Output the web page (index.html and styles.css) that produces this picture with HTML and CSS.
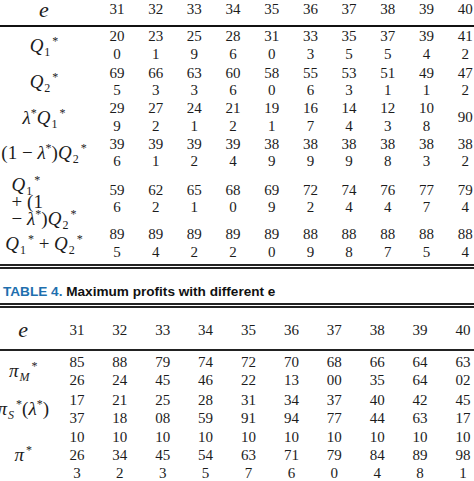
FILE: index.html
```html
<!DOCTYPE html>
<html>
<head>
<meta charset="utf-8">
<link rel="stylesheet" href="styles.css">
</head>
<body>
<div class="page">
  <div class="t1">
    <div class="row head">
      <div class="lab"><i class="ev">e</i></div>
      <div class="c">31</div><div class="c">32</div><div class="c">33</div><div class="c">34</div><div class="c">35</div>
      <div class="c">36</div><div class="c">37</div><div class="c">38</div><div class="c">39</div><div class="c">40</div>
    </div>
    <div class="row r1">
      <div class="lab"><span class="m"><i>Q</i><sub>1</sub><sup>*</sup></span></div>
      <div class="c">20<br>0</div><div class="c">23<br>1</div><div class="c">25<br>9</div><div class="c">28<br>6</div><div class="c">31<br>0</div>
      <div class="c">33<br>3</div><div class="c">35<br>5</div><div class="c">37<br>5</div><div class="c">39<br>4</div><div class="c">41<br>2</div>
    </div>
    <div class="row r2">
      <div class="lab"><span class="m"><i>Q</i><sub>2</sub><sup>*</sup></span></div>
      <div class="c">69<br>5</div><div class="c">66<br>3</div><div class="c">63<br>3</div><div class="c">60<br>6</div><div class="c">58<br>0</div>
      <div class="c">55<br>6</div><div class="c">53<br>3</div><div class="c">51<br>1</div><div class="c">49<br>1</div><div class="c">47<br>2</div>
    </div>
    <div class="row r3">
      <div class="lab"><span class="m"><i>λ</i><sup class="tight">*</sup><i>Q</i><sub>1</sub><sup>*</sup></span></div>
      <div class="c">29<br>9</div><div class="c">27<br>2</div><div class="c">24<br>1</div><div class="c">21<br>2</div><div class="c">19<br>1</div>
      <div class="c">16<br>7</div><div class="c">14<br>4</div><div class="c">12<br>3</div><div class="c">10<br>8</div><div class="c">90</div>
    </div>
    <div class="row r4">
      <div class="lab"><span class="m">(1 − <i>λ</i><sup class="tight">*</sup>)<i>Q</i><sub>2</sub><sup>*</sup></span></div>
      <div class="c">39<br>6</div><div class="c">39<br>1</div><div class="c">39<br>2</div><div class="c">39<br>4</div><div class="c">38<br>9</div>
      <div class="c">38<br>9</div><div class="c">38<br>9</div><div class="c">38<br>8</div><div class="c">38<br>3</div><div class="c">38<br>2</div>
    </div>
    <div class="row r5">
      <div class="lab"><span class="m multi"><span class="ln"><i>Q</i><sub>1</sub><sup>*</sup></span><span class="ln">+ (1</span><span class="ln">− <i>λ</i><sup class="tight">*</sup>)<i>Q</i><sub>2</sub><sup>*</sup></span></span></div>
      <div class="c">59<br>6</div><div class="c">62<br>2</div><div class="c">65<br>1</div><div class="c">68<br>0</div><div class="c">69<br>9</div>
      <div class="c">72<br>2</div><div class="c">74<br>4</div><div class="c">76<br>4</div><div class="c">77<br>7</div><div class="c">79<br>4</div>
    </div>
    <div class="row r6">
      <div class="lab"><span class="m"><i>Q</i><sub>1</sub><sup>*</sup> + <i>Q</i><sub>2</sub><sup>*</sup></span></div>
      <div class="c">89<br>5</div><div class="c">89<br>4</div><div class="c">89<br>2</div><div class="c">89<br>2</div><div class="c">89<br>0</div>
      <div class="c">88<br>9</div><div class="c">88<br>8</div><div class="c">88<br>7</div><div class="c">88<br>5</div><div class="c">88<br>4</div>
    </div>
  </div>

  <div class="caption"><span class="tno">TABLE 4.</span> Maximum profits with different e</div>

  <div class="t2">
    <div class="row head">
      <div class="lab"><i class="ev">e</i></div>
      <div class="c">31</div><div class="c">32</div><div class="c">33</div><div class="c">34</div><div class="c">35</div>
      <div class="c">36</div><div class="c">37</div><div class="c">38</div><div class="c">39</div><div class="c">40</div>
    </div>
    <div class="row r1">
      <div class="lab"><span class="m"><i>π</i><sub><i>M</i></sub><sup>*</sup></span></div>
      <div class="c">85<br>26</div><div class="c">88<br>24</div><div class="c">79<br>45</div><div class="c">74<br>46</div><div class="c">72<br>22</div>
      <div class="c">70<br>13</div><div class="c">68<br>00</div><div class="c">66<br>35</div><div class="c">64<br>64</div><div class="c">63<br>02</div>
    </div>
    <div class="row r2">
      <div class="lab"><span class="m"><i>π</i><sub><i>S</i></sub><sup>*</sup>(<i>λ</i><sup class="tight">*</sup>)</span></div>
      <div class="c">17<br>37</div><div class="c">21<br>18</div><div class="c">25<br>08</div><div class="c">28<br>59</div><div class="c">31<br>91</div>
      <div class="c">34<br>94</div><div class="c">37<br>77</div><div class="c">40<br>44</div><div class="c">42<br>63</div><div class="c">45<br>17</div>
    </div>
    <div class="row r3">
      <div class="lab"><span class="m"><i>π</i><sup>*</sup></span></div>
      <div class="c">10<br>26<br>3</div><div class="c">10<br>34<br>2</div><div class="c">10<br>45<br>3</div><div class="c">10<br>54<br>5</div><div class="c">10<br>63<br>7</div>
      <div class="c">10<br>71<br>6</div><div class="c">10<br>79<br>0</div><div class="c">10<br>84<br>4</div><div class="c">10<br>89<br>8</div><div class="c">10<br>98<br>1</div>
    </div>
  </div>
</div>
</body>
</html>
```
FILE: styles.css
```css
html, body {
  margin: 0;
  padding: 0;
  background: #ffffff;
}
.page {
  width: 474px;
  height: 481px;
  overflow: hidden;
  font-family: "Liberation Serif", "Times New Roman", serif;
  color: #1c1c1c;
}
.row {
  display: grid;
  align-items: center;
  width: max-content;
  min-width: 474px;
}
.t1 .row {
  grid-template-columns: 97.6px repeat(10, 38.7px);
}
.t2 .row {
  grid-template-columns: 55.5px repeat(10, 42.9px);
}
.c {
  text-align: center;
  font-size: 15px;
  line-height: 17.5px;
}
.t2 .c {
  line-height: 18px;
}
.lab {
  display: flex;
  justify-content: center;
  white-space: nowrap;
}
.t1 .lab { padding-right: 9.6px; }
.t2 .lab { padding-right: 9px; }
.m {
  font-size: 19px;
  line-height: 20px;
}
.m i { font-style: italic; }
.m sub, .m sup {
  font-size: 12px;
  line-height: 0;
  position: relative;
  vertical-align: baseline;
}
.m sub { top: 4px; margin-left: 1px; }
.m sup { top: -7px; margin-left: 2px; }
.m sup.tight { margin-left: 0; top: -7px; }
.multi {
  display: flex;
  flex-direction: column;
  align-items: flex-start;
  line-height: 17px;
  padding-top: 5px;
}
.ev {
  font-size: 22px;
  font-style: italic;
  line-height: 20px;
}

/* table 1 */
.t1 .head {
  height: 20px;
  padding-bottom: 5px;
  border-bottom: 2px solid #111;
}
.t1 .r1 { height: 37px; }
.t1 .r2 { height: 36px; }
.t1 .r3 { height: 35px; }
.t1 .r4 { height: 36px; }
.t1 .r5 { height: 52px; }
.t1 .r6 {
  height: 41px;
  border-bottom: 5px double #222;
}

/* caption */
.caption {
  height: 19px;
  padding: 15px 0 0 3px;
  font-family: "Liberation Sans", Arial, sans-serif;
  font-weight: bold;
  font-size: 13.6px;
  line-height: 16px;
  color: #111;
  border-bottom: 5px double #222;
}
.tno { color: #1e6fae; }

/* table 2 */
.t2 .head {
  height: 39px;
  padding-top: 2px;
  border-bottom: 2px solid #222;
}
.t2 .r1 { height: 39px; }
.t2 .r2 { height: 38px; }
.t2 .r3 { height: 54px; }
```
